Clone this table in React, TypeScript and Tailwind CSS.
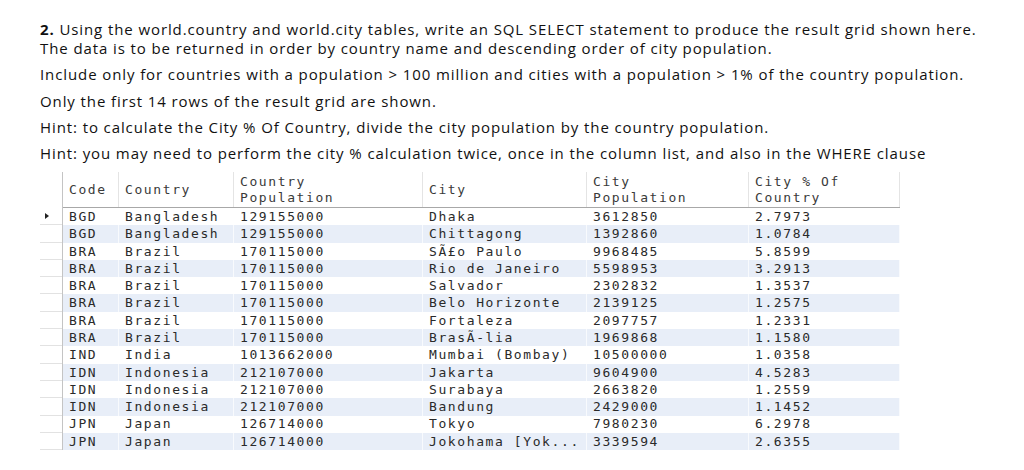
import { ReactNode } from "react";

const rows: string[][] = [
  ["BGD", "Bangladesh", "129155000", "Dhaka", "3612850", "2.7973"],
  ["BGD", "Bangladesh", "129155000", "Chittagong", "1392860", "1.0784"],
  ["BRA", "Brazil", "170115000", "SÃ£o Paulo", "9968485", "5.8599"],
  ["BRA", "Brazil", "170115000", "Rio de Janeiro", "5598953", "3.2913"],
  ["BRA", "Brazil", "170115000", "Salvador", "2302832", "1.3537"],
  ["BRA", "Brazil", "170115000", "Belo Horizonte", "2139125", "1.2575"],
  ["BRA", "Brazil", "170115000", "Fortaleza", "2097757", "1.2331"],
  ["BRA", "Brazil", "170115000", "BrasÃ-lia", "1969868", "1.1580"],
  ["IND", "India", "1013662000", "Mumbai (Bombay)", "10500000", "1.0358"],
  ["IDN", "Indonesia", "212107000", "Jakarta", "9604900", "4.5283"],
  ["IDN", "Indonesia", "212107000", "Surabaya", "2663820", "1.2559"],
  ["IDN", "Indonesia", "212107000", "Bandung", "2429000", "1.1452"],
  ["JPN", "Japan", "126714000", "Tokyo", "7980230", "6.2978"],
  ["JPN", "Japan", "126714000", "Jokohama [Yok...", "3339594", "2.6355"],
];

const widths = ["w-[56px]", "w-[115px]", "w-[189px]", "w-[164px]", "w-[162px]", "w-[151px]"];

function Head({ w, children }: { w: string; children: ReactNode }) {
  return <div className={`${w} h-full flex items-center px-[6px] border-r border-[#e4e4e4] leading-[16px] text-[#3a3a3a]`}>{children}</div>;
}

export default function App() {
  return (
    <div className="w-[1024px] h-[470px] bg-white overflow-hidden pl-[40px] pt-[20px]" style={{ fontFamily: "'Open Sans', sans-serif" }}>
      <div className="text-[15px] leading-[19px] tracking-[0.9px] text-[#111]">
        <p><b>2.</b> Using the world.country and world.city tables, write an SQL SELECT statement to produce the result grid shown here.<br />The data is to be returned in order by country name and descending order of city population.</p>
        <p className="mt-[6.5px]">Include only for countries with a population &gt; 100 million and cities with a population &gt; 1% of the country population.</p>
        <p className="mt-[8px]">Only the first 14 rows of the result grid are shown.</p>
        <p className="mt-[7px]">Hint: to calculate the City % Of Country, divide the city population by the country population.</p>
        <p className="mt-[7px]">Hint: you may need to perform the city % calculation twice, once in the column list, and also in the WHERE clause</p>
      </div>

      <div className="mt-[9.5px] flex text-[13px] tracking-[1.6px]" style={{ fontFamily: "'DejaVu Sans Mono', 'Liberation Mono', monospace" }}>
        <div className="w-[23px] border-r border-[#c4c4c4] flex flex-col">
          <div className="h-[36px]" />
          {rows.map((_, i) => (
            <div key={i} className="h-[17.3px] border-b border-[#e2e2e2] flex items-center pl-[5px]">
              {i === 0 ? <div className="w-0 h-0 border-y-[3.5px] border-y-transparent border-l-[4px] border-l-[#222]" /> : null}
            </div>
          ))}
        </div>
        <div className="flex flex-col">
          <div className="h-[36px] flex border-b border-[#a8a8a8]">
            <Head w={widths[0]}>Code</Head>
            <Head w={widths[1]}>Country</Head>
            <Head w={widths[2]}><span>Country<br />Population</span></Head>
            <Head w={widths[3]}>City</Head>
            <Head w={widths[4]}><span>City<br />Population</span></Head>
            <Head w={widths[5]}><span>City % Of<br />Country</span></Head>
          </div>
          {rows.map((r, i) => (
            <div key={i} className={`h-[17.3px] flex items-center text-[#2a2a2a] ${i % 2 === 1 ? "bg-[#e8eef8]" : "bg-white"}`}>
              {r.map((c, j) => (
                <div key={j} className={`${widths[j]} h-full flex items-center px-[6px] whitespace-nowrap overflow-hidden border-r border-white/70`}>{c}</div>
              ))}
            </div>
          ))}
        </div>
      </div>
    </div>
  );
}
